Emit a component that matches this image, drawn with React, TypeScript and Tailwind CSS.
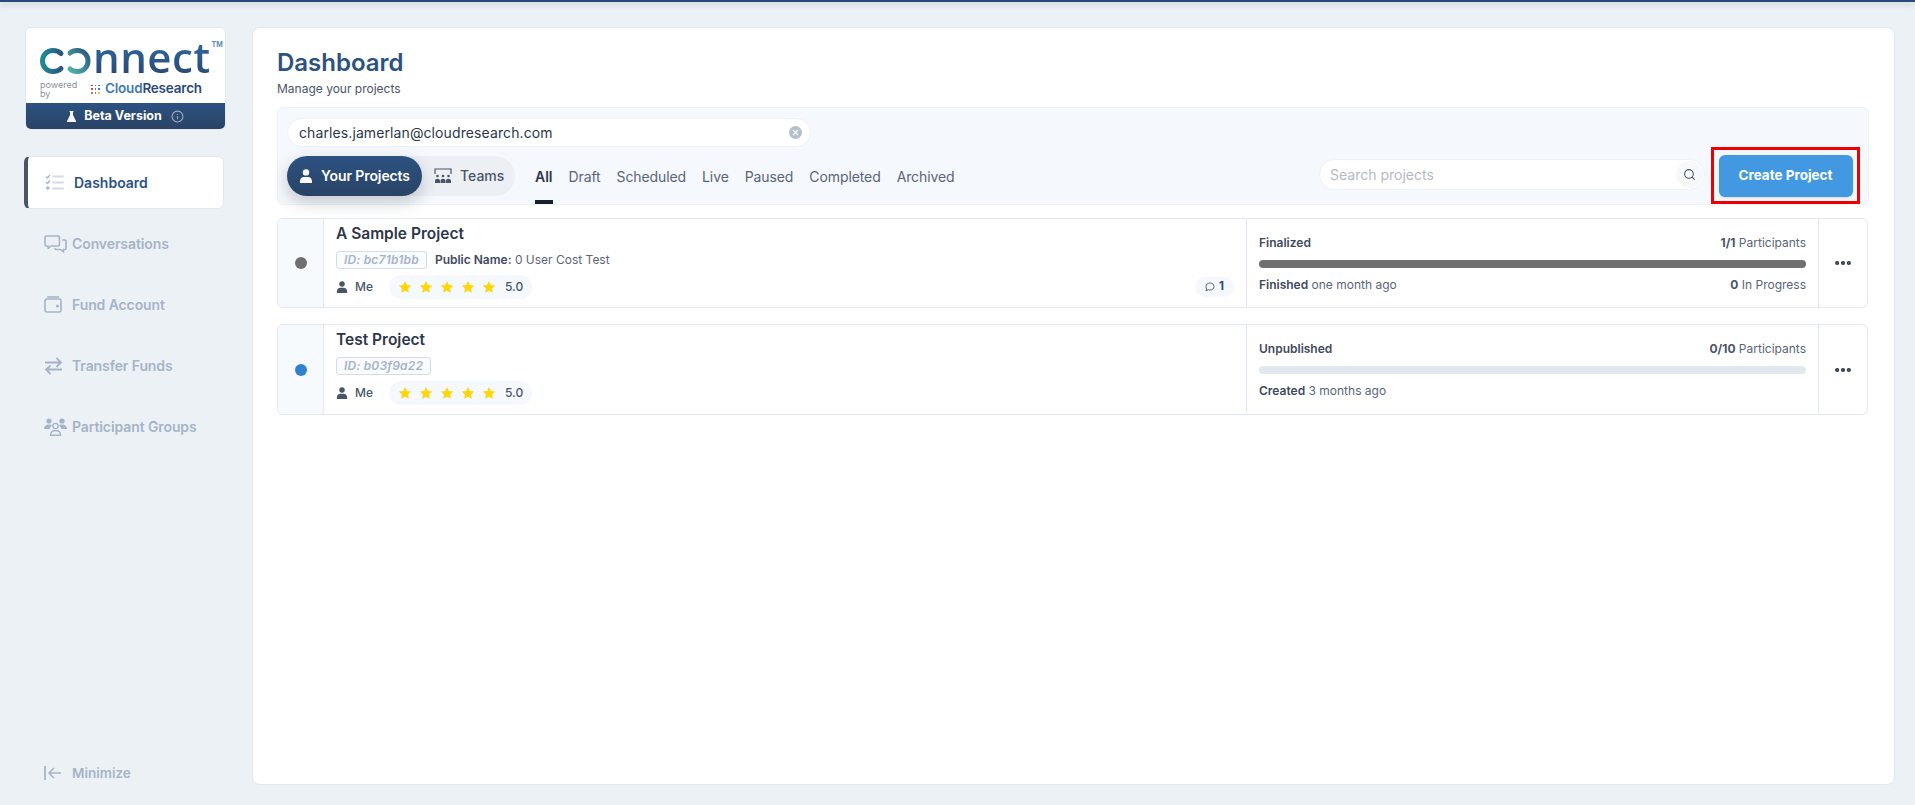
import { Search, Info, MoreHorizontal } from "lucide-react";

const font = { fontFamily: '"Inter", "Liberation Sans", sans-serif' };

function ChecklistIcon() {
  return (
    <svg width="19" height="17" viewBox="0 0 19 17" fill="none" className="shrink-0">
      <path d="M1 2.5 2.5 4 5 1M1 8 2.5 9.5 5 6.5" stroke="#a6b7cc" strokeWidth="1.4" />
      <circle cx="2.8" cy="14" r="1.8" fill="#a6b7cc" />
      <path d="M8 2.5h10M8 8.5h10M8 14.5h10" stroke="#d3dce8" strokeWidth="1.8" strokeLinecap="round" />
    </svg>
  );
}

function ChatIcon() {
  return (
    <svg width="23" height="18" viewBox="0 0 23 18" fill="none" stroke="#a6b4c8" strokeWidth="1.6" strokeLinejoin="round" className="shrink-0">
      <path d="M2.2 1h12a1.2 1.2 0 0 1 1.2 1.2v7.6a1.2 1.2 0 0 1-1.2 1.2H7l-2.8 2.4V11h-2A1.2 1.2 0 0 1 1 9.800V2.200A1.200 1.200 0 0 1 2.200 1z" />
      <path d="M18 5h3a1 1 0 0 1 1 1v7.500a1 1 0 0 1-1 1h-1.500V17l-2.800-2.500H12a1 1 0 0 1-1-1V13" />
    </svg>
  );
}

function WalletIcon() {
  return (
    <svg width="18" height="17" viewBox="0 0 18 17" fill="none" stroke="#a6b4c8" strokeWidth="1.600" className="shrink-0">
      <rect x="1" y="3" width="16" height="13" rx="2" />
      <path d="M3 1h12" />
      <circle cx="13.500" cy="10" r="0.700" fill="#a6b4c8" />
    </svg>
  );
}

function TransferIcon() {
  return (
    <svg width="19" height="18" viewBox="0 0 19 18" fill="none" stroke="#a6b4c8" strokeWidth="1.800" className="shrink-0">
      <path d="M1 5.500h16M12.500 1 17 5.500 12.500 10" strokeLinejoin="miter" />
      <path d="M18 12.500H2M6.500 8.500 2 12.500 6.500 17" />
    </svg>
  );
}

function GroupIcon() {
  return (
    <svg width="23" height="18" viewBox="0 0 23 18" className="shrink-0">
      <circle cx="5" cy="3" r="2.600" fill="#a6b4c8" />
      <circle cx="18" cy="3" r="2.600" fill="#a6b4c8" />
      <path d="M0 11c0-3 2-4.500 5-4.500 1.500 0 2.500.3 3 1C6.500 8.500 6 9.500 6 11zM23 11c0-3-2-4.500-5-4.500-1.500 0-2.500.3-3 1 1.500 1 2 2 2 3.500z" fill="#a6b4c8" />
      <circle cx="11.500" cy="8" r="2.600" fill="none" stroke="#a6b4c8" strokeWidth="1.400" />
      <path d="M6.500 17.300c0-3.300 2-4.800 5-4.800s5 1.500 5 4.800z" fill="none" stroke="#a6b4c8" strokeWidth="1.400" />
    </svg>
  );
}

function MinimizeIcon() {
  return (
    <svg width="17" height="14" viewBox="0 0 17 14" fill="none" stroke="#a6b4c8" strokeWidth="1.500" className="shrink-0">
      <path d="M1 0v14" strokeWidth="1.800" />
      <path d="M17 7H5M10 2 5 7l5 5" />
    </svg>
  );
}

function PersonIcon({ color, size }: { color: string; size: number }) {
  return (
    <svg width={size} height={size} viewBox="0 0 14 14" fill={color} className="shrink-0">
      <circle cx="7" cy="3.400" r="3.200" />
      <path d="M1 14v-1.800C1 9.500 3 8 5 8h4c2 0 4 1.500 4 4.200V14z" />
    </svg>
  );
}

function TeamsIcon() {
  return (
    <svg width="18" height="16" viewBox="0 0 18 16" fill="none" className="shrink-0">
      <path d="M1 6V1h16v5" stroke="#4a5568" strokeWidth="1.200" />
      <g fill="#4a5568">
        <circle cx="3.500" cy="8" r="1.300" />
        <circle cx="9" cy="8" r="1.300" />
        <circle cx="14.500" cy="8" r="1.300" />
        <path d="M1 15v-2c0-1.500 1-2.300 2.500-2.300S6 11.500 6 13v2zM6.500 15v-2c0-1.500 1-2.300 2.500-2.300s2.500.8 2.500 2.300v2zM12 15v-2c0-1.500 1-2.300 2.500-2.300S17 11.500 17 13v2z" />
      </g>
    </svg>
  );
}

function Star() {
  return (
    <svg width="14" height="14" viewBox="0 0 24 24" fill="#ffd60a" className="shrink-0">
      <path d="M12 1.500l3.200 6.900 7.500.9-5.500 5.200 1.400 7.500L12 18.400l-6.600 3.600 1.400-7.500L1.300 9.300l7.500-.9z" />
    </svg>
  );
}

function Logo() {
  const cells = ["#e53e3e", "#38a169", "#3182ce", "#e53e3e", "#805ad5", "#3182ce", "#dd6b20", "#38b2ac", "#ecc94b"];
  return (
    <div className="h-[75px] px-[14px] pt-[12px] bg-white">
      <div className="flex items-end h-[34px]">
        <svg width="51" height="26" viewBox="0 0 51 26" fill="none" strokeWidth="5" strokeLinecap="round" className="shrink-0 mb-[0px]">
          <defs>
            <linearGradient id="ringA" x1="0" y1="0" x2="1" y2="0">
              <stop offset="0" stopColor="#1d8a94" />
              <stop offset="1" stopColor="#2b5680" />
            </linearGradient>
            <linearGradient id="ringB" x1="0" y1="1" x2="1" y2="0">
              <stop offset="0" stopColor="#4fb3a8" />
              <stop offset="1" stopColor="#2b5680" />
            </linearGradient>
          </defs>
          <path d="M21 5.500C19 3.500 16.500 2.500 13 2.500 7 2.500 2.500 7 2.500 13S7 23.500 13 23.500c3.500 0 6-1 8-3" stroke="url(#ringA)" />
          <path d="M30 5c1.500-1.500 4-2.500 7.500-2.500C43.500 2.500 48 7 48 13s-4.500 10.500-10.500 10.500c-3.500 0-6-1-7.500-2.500" stroke="url(#ringB)" />
        </svg>
        <span
          className="text-[42px] leading-[34px] font-semibold bg-gradient-to-b from-[#2f6c9e] to-[#2a4a78] bg-clip-text text-transparent tracking-[0.5px] ml-[2px]"
          style={{ fontFamily: '"Open Sans", sans-serif' }}
        >
          nnect
        </span>
        <span className="text-[7px] leading-none font-bold text-[#5b8db3] self-start mt-[1px] ml-[1px]">TM</span>
      </div>
      <div className="flex items-center mt-[6px]">
        <span className="text-[9px] leading-none text-[#8a8f98] w-[50px]">powered by</span>
        <div className="grid grid-cols-3 w-[11px] h-[11px] shrink-0">
          {cells.map((c, i) => (
            <div key={i} className="border-[0.5px] border-white" style={{ backgroundColor: c }} />
          ))}
        </div>
        <span className="text-[13.500px] leading-none font-semibold ml-[4px] tracking-[-0.2px]">
          <span className="text-[#3b7ab8]">Cloud</span>
          <span className="text-[#2a4a78]">Research</span>
        </span>
      </div>
    </div>
  );
}

const navItems = [
  { label: "Conversations", icon: <ChatIcon /> },
  { label: "Fund Account", icon: <WalletIcon /> },
  { label: "Transfer Funds", icon: <TransferIcon /> },
  { label: "Participant Groups", icon: <GroupIcon /> },
];

function Sidebar() {
  return (
    <aside className="w-[252px] shrink-0 flex flex-col pl-[24px] pr-[26px] pt-[25px] pb-[20px]">
      <div className="ml-[1px] w-[201px] rounded-[6px] border border-[#e2e8f0] overflow-hidden">
        <Logo />
        <div className="h-[26px] flex items-center justify-center gap-[8px] bg-gradient-to-b from-[#2c5282] to-[#2a4365] text-white">
          <svg width="9" height="11" viewBox="0 0 9 11" fill="#f1f5f9" className="shrink-0">
            <path d="M2.500 0h4v1H6v3l3 6v1H0v-1l3-6V1h-.5z" />
          </svg>
          <span className="text-[12.500px] font-bold leading-none">Beta Version</span>
          <Info size={13} color="#a0aec0" strokeWidth={2} className="ml-[1px]" />
        </div>
      </div>

      <nav className="flex flex-col gap-[8px] mt-[26px] w-[200px]">
        <div className="h-[53px] flex items-center pl-[17px] gap-[10px] bg-white rounded-[6px] border border-[#e2e8f0] border-l-[4px] border-l-[#4a5568]">
          <ChecklistIcon />
          <span className="text-[14px] font-semibold text-[#2c5282]">Dashboard</span>
        </div>
        {navItems.map((n) => (
          <div key={n.label} className="h-[53px] flex items-center pl-[20px]">
            <span className="w-[28px] flex">{n.icon}</span>
            <span className="text-[14px] font-semibold text-[#a6b4c8] tracking-[-0.1px]">{n.label}</span>
          </div>
        ))}
      </nav>

      <div className="mt-auto flex items-center pl-[20px] pb-[2px]">
        <span className="w-[28px] flex">
          <MinimizeIcon />
        </span>
        <span className="text-[13.500px] font-semibold text-[#a6b4c8]">Minimize</span>
      </div>
    </aside>
  );
}

const tabs = ["All", "Draft", "Scheduled", "Live", "Paused", "Completed", "Archived"];

function Filters() {
  return (
    <div className="h-[98px] rounded-[6px] border border-[#edf2f7] bg-[#f5f8fc] px-[9px] pt-[10px] flex flex-col">
      <div className="h-[30px] w-[524px] rounded-full border border-[#edf2f7] bg-white flex items-center pl-[11px] pr-[8px] justify-between">
        <span className="text-[14px] text-[#2d3748] tracking-[0.1px]">charles.jamerlan@cloudresearch.com</span>
        <span className="w-[13px] h-[13px] rounded-full bg-[#b4bfcc] flex items-center justify-center">
          <svg width="7" height="7" viewBox="0 0 7 7" stroke="#fff" strokeWidth="1.300">
            <path d="M1 1l5 5M6 1 1 6" />
          </svg>
        </span>
      </div>
      <div className="h-[57px] flex items-center">
        <div className="flex items-center h-[40px] w-[228px] rounded-full bg-[#ecf0f5] shrink-0">
          <div className="h-[40px] w-[135px] rounded-full bg-gradient-to-b from-[#2c5282] to-[#2a4365] flex items-center justify-center gap-[8px] shadow-[0_6px_16px_rgba(45,55,72,0.25)]">
            <PersonIcon color="#fff" size={14} />
            <span className="text-[14px] font-semibold text-white tracking-[-0.1px]">Your Projects</span>
          </div>
          <div className="flex items-center gap-[8px] pl-[12px]">
            <TeamsIcon />
            <span className="text-[14px] font-medium text-[#4a5568]">Teams</span>
          </div>
        </div>
        <div className="flex items-stretch h-full gap-[16px] ml-[20px] pt-[1px]">
          {tabs.map((t, i) => (
            <div
              key={t}
              className={
                i === 0
                  ? "flex items-center text-[14px] font-semibold text-[#2d3748] border-b-[4px] border-[#1a202c] pt-[4px]"
                  : "flex items-center text-[14px] text-[#5a6577] pb-[0px] tracking-[-0.1px]"
              }
            >
              {t}
            </div>
          ))}
        </div>
        <div className="ml-auto h-[31px] w-[386px] rounded-full border border-[#edf2f7] bg-white flex items-center justify-between pl-[10px] pr-[1px] mb-[2px]">
          <span className="text-[14px] text-[#b5bac2]">Search projects</span>
          <span className="w-[27px] h-[27px] rounded-full bg-[#f7f8fa] flex items-center justify-center">
            <Search size={13} color="#4a5568" strokeWidth={2} />
          </span>
        </div>
        <div className="ml-[6px] border-[3px] border-[#ee0000] h-[57px] w-[149px] shrink-0 flex items-center justify-center mr-[-1px]">
          <button className="w-[134px] h-[42px] rounded-[6px] bg-[#4299e1] text-white text-[13.500px] font-bold shadow-sm">
            Create Project
          </button>
        </div>
      </div>
    </div>
  );
}

type Project = {
  title: string;
  id: string;
  publicName?: string;
  dot: string;
  status: string;
  count: string;
  bar: string;
  whenLabel: string;
  when: string;
  progress?: string;
  comments?: string;
  h: string;
};

const projects: Project[] = [
  {
    title: "A Sample Project",
    id: "ID: bc71b1bb",
    publicName: "0 User Cost Test",
    dot: "bg-[#6f6f6f]",
    status: "Finalized",
    count: "1/1",
    bar: "bg-[#6f6f6f]",
    whenLabel: "Finished",
    when: "one month ago",
    progress: "0",
    comments: "1",
    h: "h-[90px]",
  },
  {
    title: "Test Project",
    id: "ID: b03f9a22",
    dot: "bg-[#3182ce]",
    status: "Unpublished",
    count: "0/10",
    bar: "bg-[#e2e8f0]",
    whenLabel: "Created",
    when: "3 months ago",
    h: "h-[91px]",
  },
];

function ProjectCard({ p }: { p: Project }) {
  return (
    <div className={`${p.h} rounded-[6px] border border-[#e2e8f0] flex`}>
      <div className="w-[46px] shrink-0 bg-[#f7fafc] rounded-l-[6px] border-r border-[#e2e8f0] flex items-center justify-center">
        <span className={`w-[12px] h-[12px] rounded-full ${p.dot}`} />
      </div>
      <div className="flex-1 min-w-0 pl-[12px] pr-[12px] pt-[5px] relative">
        <div className="text-[15.500px] leading-[20px] font-semibold text-[#2d3748]">{p.title}</div>
        <div className="flex items-center mt-[7px] h-[18px]">
          <span className="h-[18px] px-[7px] rounded-[3px] border border-[#d5dce6] bg-[#fafbfc] text-[12px] leading-[16px] font-semibold italic text-[#a6b4c8] tracking-[0.2px]">
            {p.id}
          </span>
          {p.publicName && (
            <span className="ml-[8px] text-[12px] text-[#5a6577]">
              <span className="font-semibold text-[#3e4a5c]">Public Name:</span> {p.publicName}
            </span>
          )}
        </div>
        <div className="flex items-center mt-[6px]">
          <PersonIcon color="#4a5568" size={12} />
          <span className="ml-[7px] text-[12px] font-medium text-[#4a5568]">Me</span>
          <div className="ml-[16px] h-[24px] w-[143px] rounded-full bg-[#f5f8fc] flex items-center pl-[9px]">
            <div className="flex gap-[7px]">
              <Star />
              <Star />
              <Star />
              <Star />
              <Star />
            </div>
            <span className="ml-[9px] text-[12px] font-medium text-[#4a5568]">5.0</span>
          </div>
          {p.comments && (
            <div className="ml-auto h-[20px] w-[39px] rounded-full bg-[#f5f8fc] flex items-center justify-center gap-[4px]">
              <svg width="10" height="10" viewBox="0 0 10 10" fill="none" stroke="#4a5568" strokeWidth="0.900">
                <path d="M5 1c2.300 0 4 1.400 4 3.500S7.300 8 5 8c-.8 0-1.500-.1-2-.4L1 9l.6-2C1.200 6.300 1 5.500 1 4.500 1 2.400 2.700 1 5 1z" />
              </svg>
              <span className="text-[11.500px] font-bold text-[#2c4a77]">{p.comments}</span>
            </div>
          )}
        </div>
      </div>
      <div className="w-[572px] shrink-0 border-l border-[#e2e8f0] pl-[12px] pr-[12px] pt-[15px]">
        <div className="flex justify-between text-[12px] leading-[18px] text-[#5a6577]">
          <span className="font-semibold text-[#3e4a5c]">{p.status}</span>
          <span>
            <span className="font-bold text-[#4a5568]">{p.count}</span> Participants
          </span>
        </div>
        <div className={`h-[8px] rounded-full mt-[8px] ${p.bar}`} />
        <div className="flex justify-between text-[12px] leading-[18px] text-[#5a6577] mt-[8px]">
          <span>
            <span className="font-semibold text-[#3e4a5c]">{p.whenLabel}</span> {p.when}
          </span>
          {p.progress && (
            <span>
              <span className="font-bold text-[#4a5568]">{p.progress}</span> In Progress
            </span>
          )}
        </div>
      </div>
      <div className="w-[49px] shrink-0 border-l border-[#e2e8f0] flex items-center justify-center">
        <MoreHorizontal size={20} color="#2d3748" strokeWidth={3} />
      </div>
    </div>
  );
}

export default function App() {
  return (
    <div className="h-screen flex flex-col bg-[#ecf1f6] overflow-hidden" style={font}>
      <div className="h-[2px] shrink-0 bg-[#2c4a77] shadow-[0_2px_6px_rgba(45,55,72,0.3)]" />
      <div className="flex-1 min-h-0 flex">
        <Sidebar />
        <main className="flex-1 min-w-0 mt-[25px] mb-[20px] mr-[20px] rounded-[8px] border border-[#e2e8f0] bg-white pl-[24px] pr-[25px] pt-[20px]">
          <h1 className="text-[24px] leading-[30px] font-semibold text-[#2c5282]">Dashboard</h1>
          <p className="text-[12px] leading-[16px] text-[#4a5568] mt-[3px]">Manage your projects</p>
          <div className="mt-[10px]">
            <Filters />
          </div>
          <div className="flex flex-col gap-[16px] mt-[13px] mr-[1px]">
            {projects.map((p) => (
              <ProjectCard key={p.title} p={p} />
            ))}
          </div>
        </main>
      </div>
    </div>
  );
}
